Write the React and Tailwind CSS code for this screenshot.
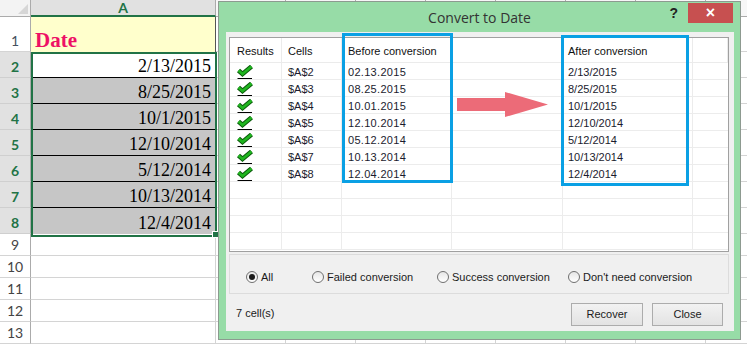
import React from 'react';

const dates = ['2/13/2015', '8/25/2015', '10/1/2015', '12/10/2014', '5/12/2014', '10/13/2014', '12/4/2014'];

const results = [
  ['$A$2', '02.13.2015', '2/13/2015'],
  ['$A$3', '08.25.2015', '8/25/2015'],
  ['$A$4', '10.01.2015', '10/1/2015'],
  ['$A$5', '12.10.2014', '12/10/2014'],
  ['$A$6', '05.12.2014', '5/12/2014'],
  ['$A$7', '10.13.2014', '10/13/2014'],
  ['$A$8', '12.04.2014', '12/4/2014'],
];

const cols = ['w-[52px] pl-[7px]', 'w-[60px] pl-[6px]', 'w-[110px] pl-[6px]', 'w-[111px] pl-[6px]', 'w-[130px] pl-[5px]', 'flex-1'];

const Rest = () => (
  <div className="flex flex-1">
    {[0, 1, 2, 3, 4, 5, 6, 7].map(k => (
      <div key={k} className="w-[70px] shrink-0 border-r border-b border-[#d4d4d4]" />
    ))}
  </div>
);

const Check = () => (
  <svg width="16" height="14" viewBox="0 0 16 14">
    <path d="M1.5 5.5 L5.5 9 L14.5 1.5" stroke="#0b5a0b" strokeWidth="4.6" fill="none" />
    <path d="M1.5 5.5 L5.5 9 L14.5 1.5" stroke="#1fb51f" strokeWidth="2.6" fill="none" />
    <line x1="0.5" y1="13.5" x2="15" y2="13.5" stroke="#000" strokeWidth="1" />
  </svg>
);

const Radio = ({ checked, label, cls }) => (
  <div className={`flex items-center gap-[3px] ${cls}`}>
    <span className="w-[12px] h-[12px] rounded-full border border-[#6f6f6f] bg-gradient-to-b from-[#e6e6e6] to-white flex items-center justify-center">
      {checked && <span className="w-[6px] h-[6px] rounded-full bg-[#1a1a1a]" />}
    </span>
    <span>{label}</span>
  </div>
);

export default function App() {
  return (
    <div className="relative w-[747px] h-[345px] overflow-hidden bg-white font-['Lato',sans-serif]">
      {/* sheet */}
      <div className="flex flex-col">
        <div className="flex h-[17px]">
          <div className="w-[31px] shrink-0 bg-[#f3f3f3] border-r border-b border-[#ababab] relative">
            <div className="absolute right-[2px] bottom-[2px] w-0 h-0 border-l-[10px] border-l-transparent border-b-[10px] border-b-[#d6d6d6]" />
          </div>
          <div className="w-[185px] shrink-0 bg-[#e1e1e1] border-r border-[#ababab] border-b-2 border-b-[#217346] flex items-center justify-center text-[14px] font-bold text-[#217346] leading-none">A</div>
          <div className="flex flex-1 bg-[#f7f7f7]">
            {[0, 1, 2, 3, 4, 5, 6, 7].map(k => (
              <div key={k} className="w-[70px] shrink-0 border-r border-b border-[#ababab]" />
            ))}
          </div>
        </div>

        <div className="flex h-[35px]">
          <div className="w-[31px] shrink-0 border-r border-b border-r-[#ababab] border-b-[#d4d4d4] flex items-end justify-center pb-[3px] text-[14px] leading-[14px] text-[#44505e]">1</div>
          <div className="w-[185px] shrink-0 bg-[#ffffcc] border-r border-[#555] flex items-end pl-[4px] font-['Liberation_Serif',serif] font-bold text-[21px] leading-[24px] text-[#ee1166]">Date</div>
          <Rest />
        </div>

        {dates.map((d, i) => (
          <div key={d} className="flex h-[26px]">
            <div className="w-[31px] shrink-0 bg-[#e1e1e1] border-r border-b border-r-[#ababab] border-b-[#cfcfcf] flex items-end justify-center pb-[3px] text-[14px] leading-[14px] font-bold text-[#217346]">{i + 2}</div>
            <div className={`w-[185px] shrink-0 flex items-end justify-end pr-[4px] font-['Liberation_Serif',serif] text-[18px] leading-[22px] text-black border-r border-black ${i === 0 ? 'bg-white' : 'bg-[#c6c6c6]'} ${i < 6 ? 'border-b' : ''}`}>{d}</div>
            <Rest />
          </div>
        ))}

        {[9, 10, 11, 12, 13].map(n => (
          <div key={n} className="flex h-[22px]">
            <div className="w-[31px] shrink-0 border-r border-b border-r-[#ababab] border-b-[#d4d4d4] flex items-end justify-center pb-[3px] text-[14px] leading-[14px] text-[#444]">{n}</div>
            <div className="w-[185px] shrink-0 border-r border-b border-[#d4d4d4]" />
            <Rest />
          </div>
        ))}
      </div>

      {/* selection */}
      <div className="absolute left-[31px] top-[52px] w-[186px] h-[185px] border-2 border-[#217346]" />
      <div className="absolute left-[212px] top-[231px] w-[7px] h-[7px] bg-[#217346] border border-white" />

      {/* dialog window */}
      <div className="absolute left-[218px] top-[1px] w-[523px] h-[339px] border border-[#8d9a90] bg-[#97dca7] flex flex-col font-['Liberation_Sans',sans-serif] text-[11px] text-[#1b1b2e]">
        <div className="flex items-start h-[30px] shrink-0">
          <div className="w-[75px]" />
          <div className="flex-1 self-center text-center font-['Open_Sans',sans-serif] text-[14px] text-[#333]">Convert to Date</div>
          <div className="w-[75px] flex justify-end items-start pr-[7px]">
            <span className="mt-[3px] mr-[10px] text-[14px] leading-[16px] font-bold text-[#222]">?</span>
            <div className="mt-[1px] w-[45px] h-[20px] bg-[#c75050] flex items-center justify-center text-white text-[16px] leading-none font-bold">×</div>
          </div>
        </div>

        <div className="flex-1 ml-[7px] mr-[6px] mb-[8px] bg-[#f0f0f0] pt-[5px] pl-[3px] pr-[5px] flex flex-col">
          <div className="h-[215px] bg-white border border-[#a0a0a0] flex flex-col overflow-hidden">
            <div className="flex h-[25px] border-b border-[#ebebeb] text-[#111]">
              {['Results', 'Cells', 'Before conversion', '', 'After conversion', ''].map((t, k) => (
                <div key={k} className={`${cols[k]} shrink-0 border-r border-[#ebebeb] flex items-center pt-[3px]`}>{t}</div>
              ))}
            </div>
            {Array.from({ length: 11 }).map((_, r) => {
              const row = results[r];
              return (
                <div key={r} className="flex h-[17px] border-b border-[#ececec]">
                  <div className={`${cols[0]} shrink-0 border-r border-[#ececec] flex items-center pt-[1px]`}>{row && <Check />}</div>
                  <div className={`${cols[1]} shrink-0 border-r border-[#ececec] flex items-center pt-[2px]`}>{row && row[0]}</div>
                  <div className={`${cols[2]} shrink-0 border-r border-[#ececec] flex items-center pt-[2px] tracking-[0.3px]`}>{row && row[1]}</div>
                  <div className={`${cols[3]} shrink-0 border-r border-[#ececec]`} />
                  <div className={`${cols[4]} shrink-0 border-r border-[#ececec] flex items-center pt-[2px]`}>{row && row[2]}</div>
                  <div className={`${cols[5]}`} />
                </div>
              );
            })}
          </div>

          <div className="mt-[2px] h-[40px] border border-[#dcdcdc] flex items-center pt-[6px] pl-[16px] text-[#1b1b1b]">
            <Radio checked label="All" cls="w-[66px]" />
            <Radio label="Failed conversion" cls="w-[125px]" />
            <Radio label="Success conversion" cls="w-[131px]" />
            <Radio label="Don't need conversion" cls="" />
          </div>

          <div className="flex items-start justify-between pt-[9px] pl-[7px] pr-[6px] text-[#1b1b1b]">
            <span className="mt-[2px]">7 cell(s)</span>
            <div className="flex gap-[9px]">
              <div className="w-[72px] h-[23px] border border-[#acacac] bg-gradient-to-b from-[#f2f2f2] to-[#e3e3e3] flex items-center justify-center">Recover</div>
              <div className="w-[71px] h-[23px] border border-[#acacac] bg-gradient-to-b from-[#f2f2f2] to-[#e3e3e3] flex items-center justify-center">Close</div>
            </div>
          </div>
        </div>
      </div>

      {/* highlight boxes and arrow */}
      <div className="absolute left-[342px] top-[33px] w-[111px] h-[150px] border-[3px] border-[#0aa0e4]" />
      <div className="absolute left-[561px] top-[35px] w-[128px] h-[151px] border-[3px] border-[#0aa0e4]" />
      <svg className="absolute left-[457px] top-[92px]" width="92" height="25" viewBox="0 0 92 25">
        <polygon points="0,6 48,6 48,0 91,12.5 48,25 48,19 0,19" fill="#ec6b78" />
      </svg>
    </div>
  );
}
